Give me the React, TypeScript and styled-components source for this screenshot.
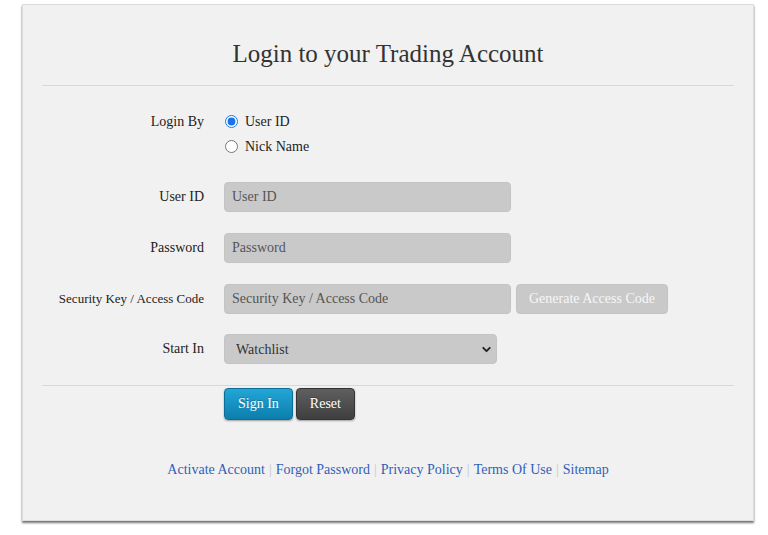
import React from 'react';
import styled, { createGlobalStyle } from 'styled-components';
import { ChevronDown } from 'lucide-react';

const GlobalStyle = createGlobalStyle`
  body {
    margin: 0;
    background: #ffffff;
    font-family: "Liberation Serif", "Times New Roman", serif;
  }
`;

const Page = styled.div`
  padding: 4px 14px 14px 22px;
`;

const Card = styled.div`
  width: 732px;
  box-sizing: border-box;
  background: #f1f1f1;
  border: 1px solid #dcdcdc;
  box-shadow: 0 2px 2px rgba(0, 0, 0, 0.55);
  padding: 0 19px 40px 0;
`;

const Title = styled.h2`
  margin: 34px 0 0 19px;
  font-weight: normal;
  font-size: 25px;
  line-height: 30px;
  color: #333;
  text-align: center;
`;

const Rule = styled.hr<{ $before: number; $after: number }>`
  border: none;
  border-top: 1px solid #d8d8d8;
  margin: ${p => p.$before}px 0 ${p => p.$after}px 19px;
`;

const Form = styled.div`
  display: grid;
  grid-template-columns: 201px 1fr;
  row-gap: 21px;
  align-items: center;
`;

const Label = styled.label<{ $small?: boolean; $pull?: boolean }>`
  text-align: right;
  padding-right: 20px;
  margin-top: ${p => (p.$pull ? '-1px' : '0')};
  font-family: "Liberation Serif", "Times New Roman", serif;
  font-size: ${p => (p.$small ? '13px' : '14px')};
  color: #222;
`;

const TopLabel = styled(Label)`
  align-self: start;
  line-height: 25px;
`;

const RadioGroup = styled.div`
  display: flex;
  flex-direction: column;
  margin-bottom: 2px;
`;

const RadioOption = styled.label`
  display: flex;
  align-items: center;
  height: 25px;
  font-family: "Liberation Serif", "Times New Roman", serif;
  font-size: 14px;
  color: #222;

  input {
    margin: 0 7px 0 1px;
    width: 13px;
    height: 13px;
    accent-color: #1a73e8;
  }
`;

const Field = styled.div<{ $pull?: boolean }>`
  display: flex;
  align-items: center;
  gap: 5px;
  margin-top: ${p => (p.$pull ? '-1px' : '0')};
`;

const TextInput = styled.input<{ $width: number }>`
  width: ${p => p.$width}px;
  height: 30px;
  box-sizing: border-box;
  border: 1px solid #c4c4c4;
  border-radius: 4px;
  background: #c9c9c9;
  padding: 0 7px;
  font-family: "Liberation Serif", "Times New Roman", serif;
  font-size: 14px;
  color: #333;
  outline: none;

  &::placeholder {
    color: #555;
  }
`;

const GhostButton = styled.button`
  height: 30px;
  border: 1px solid #c4c4c4;
  border-radius: 4px;
  background: #c9c9c9;
  color: #f7f7f7;
  font-family: "Liberation Serif", "Times New Roman", serif;
  font-size: 14px;
  padding: 0 12px;
`;

const SelectWrap = styled.div`
  position: relative;
  width: 273px;
`;

const Select = styled.select`
  width: 100%;
  height: 30px;
  appearance: none;
  border: 1px solid #c4c4c4;
  border-radius: 4px;
  background: #c9c9c9;
  padding: 0 11px;
  font-family: "Liberation Serif", "Times New Roman", serif;
  font-size: 14px;
  color: #333;
  outline: none;
`;

const Chevron = styled(ChevronDown)`
  position: absolute;
  right: 4px;
  top: 9px;
  pointer-events: none;
  color: #222;
`;

const Actions = styled.div`
  display: flex;
  gap: 3px;
  margin-left: 201px;
`;

const ActionButton = styled.button<{ $tone: 'blue' | 'dark' }>`
  height: 32px;
  border-radius: 4px;
  padding: 0 13px;
  font-family: "Liberation Serif", "Times New Roman", serif;
  font-size: 14px;
  color: #fff;
  border: 1px solid ${p => (p.$tone === 'blue' ? '#0b6e96' : '#333')};
  background: ${p =>
    p.$tone === 'blue'
      ? 'linear-gradient(#22a6d8, #0c7eac)'
      : 'linear-gradient(#5f5f5f, #3f3f3f)'};
  box-shadow: 0 1px 2px rgba(0, 0, 0, 0.35);
  text-shadow: 0 -1px 0 rgba(0, 0, 0, 0.25);
`;

const Links = styled.div`
  margin: 40px 0 0 19px;
  text-align: center;
  font-size: 14px;
  line-height: 20px;
`;

const Link = styled.a`
  color: #2f5fb8;
  text-decoration: none;
`;

const Sep = styled.span`
  color: #c8c8c8;
  margin: 0 4px;
`;

const footerLinks = ['Activate Account', 'Forgot Password', 'Privacy Policy', 'Terms Of Use', 'Sitemap'];

const App = () => {
  return (
    <Page>
      <GlobalStyle />
      <Card>
        <Title>Login to your Trading Account</Title>
        <Rule $before={16} $after={23} />
        <Form>
          <TopLabel>Login By</TopLabel>
          <RadioGroup>
            <RadioOption>
              <input type="radio" name="by" defaultChecked />
              User ID
            </RadioOption>
            <RadioOption>
              <input type="radio" name="by" />
              Nick Name
            </RadioOption>
          </RadioGroup>

          <Label>User ID</Label>
          <Field>
            <TextInput $width={287} placeholder="User ID" />
          </Field>

          <Label>Password</Label>
          <Field>
            <TextInput $width={287} type="password" placeholder="Password" />
          </Field>

          <Label $small>Security Key / Access Code</Label>
          <Field>
            <TextInput $width={287} placeholder="Security Key / Access Code" />
            <GhostButton>Generate Access Code</GhostButton>
          </Field>

          <Label $pull>Start In</Label>
          <Field $pull>
            <SelectWrap>
              <Select defaultValue="watchlist">
                <option value="watchlist">Watchlist</option>
              </Select>
              <Chevron size={13} strokeWidth={3.5} />
            </SelectWrap>
          </Field>
        </Form>
        <Rule $before={21} $after={2} />
        <Actions>
          <ActionButton $tone="blue">Sign In</ActionButton>
          <ActionButton $tone="dark">Reset</ActionButton>
        </Actions>
        <Links>
          {footerLinks.map((l, i) => (
            <React.Fragment key={l}>
              {i > 0 && <Sep>|</Sep>}
              <Link href="#">{l}</Link>
            </React.Fragment>
          ))}
        </Links>
      </Card>
    </Page>
  );
};

export default App;
